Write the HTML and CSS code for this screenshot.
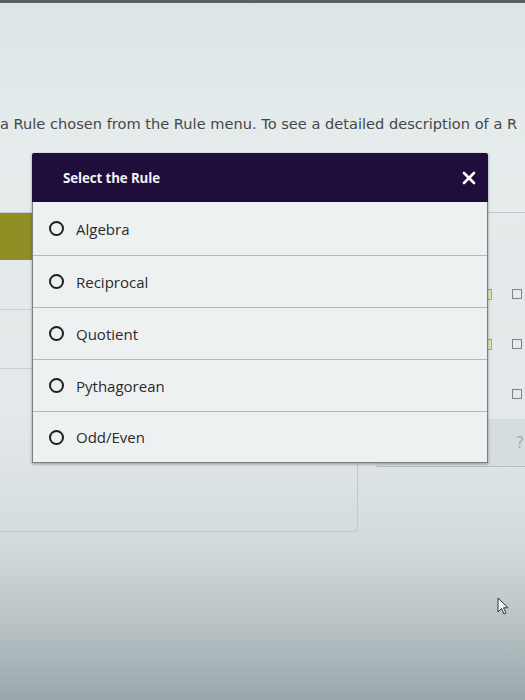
FILE: index.html
```html
<!DOCTYPE html>
<html>
<head>
<meta charset="utf-8">
<link rel="stylesheet" href="styles.css">
</head>
<body>
<div class="screen">
  <div class="topbar"></div>
  <p class="intro">a Rule chosen from the Rule menu. To see a detailed description of a R</p>
  <div class="stage">
    <div class="left">
      <div class="band"><div class="olive"></div></div>
      <div class="lrow"></div>
      <div class="lrow tall"></div>
      <div class="panel"></div>
    </div>
    <div class="right">
      <div class="mark-row"><span class="tick"></span><span class="box"></span></div>
      <div class="mark-row"><span class="tick"></span><span class="box"></span></div>
      <div class="mark-row"><span class="box"></span></div>
      <div class="rpanel"><span class="q">?</span></div>
    </div>
  </div>

  <div class="modal">
    <div class="modal-head">
      <span class="modal-title">Select the Rule</span>
      <svg class="close" width="14" height="14" viewBox="0 0 14 14"><path d="M2 2 L12 12 M12 2 L2 12" stroke="#fff" stroke-width="2.6" stroke-linecap="round"/></svg>
    </div>
    <ul class="options">
      <li class="opt first"><span class="radio"></span>Algebra</li>
      <li class="opt"><span class="radio"></span>Reciprocal</li>
      <li class="opt"><span class="radio"></span>Quotient</li>
      <li class="opt"><span class="radio"></span>Pythagorean</li>
      <li class="opt last"><span class="radio"></span>Odd/Even</li>
    </ul>
  </div>

  <svg class="cursor" width="14" height="20" viewBox="0 0 14 20"><path d="M1 1 L1 15 L4.5 11.5 L7 17 L9 16 L6.5 10.8 L11 10.8 Z" fill="#f2f4f4" stroke="#333" stroke-width="1"/></svg>
</div>
</body>
</html>
```
FILE: styles.css
```css
html, body { margin: 0; padding: 0; }
.screen {
  width: 525px;
  height: 700px;
  position: relative;
  overflow: hidden;
  background: linear-gradient(180deg, #dce5e7 0px, #e6ecec 150px, #e3e9ea 420px, #d4dbdd 540px, #bac4c7 620px, #9ba7ab 700px);
}
.topbar { height: 3px; background: #5e6060; }
.intro {
  margin: 111px 0 0 0;
  line-height: 20px;
  font-family: "DejaVu Sans", sans-serif;
  font-size: 14.6px;
  color: #454747;
  white-space: nowrap;
}
.stage { display: flex; margin-top: 78px; }
.left { width: 358px; }
.band { height: 47px; border-top: 1px solid #c4cacb; display: flex; }
.olive { width: 33px; background: #928e26; }
.lrow { height: 49px; border-bottom: 1px solid #c9cfd0; }
.lrow.tall { height: 58px; }
.panel {
  height: 162px;
  border-right: 1px solid #c3cacb;
  border-bottom: 1px solid #c3cacb;
  border-bottom-right-radius: 4px;
}
.right { flex: 1; padding-top: 56px; border-top: 1px solid #c4cacb; }
.mark-row { height: 50px; display: flex; align-items: center; }
.tick {
  width: 4px; height: 9px;
  margin-left: 128px;
  border: 1.5px solid #b5ae3a;
  background: #e6e6b0;
}
.box {
  width: 8px; height: 8px;
  margin-left: auto; margin-right: 3px;
  border: 1.5px solid #7d8384;
}
.rpanel {
  height: 47px;
  margin-left: 17px;
  background: #d6dddf;
  border-bottom: 1px solid #b8bfc0;
  border-bottom-left-radius: 3px;
  position: relative;
}
.q {
  position: absolute; right: 1px; top: 15px;
  font-family: "DejaVu Sans", sans-serif; font-size: 15px; color: #a2aaac;
}

.modal {
  position: absolute;
  left: 32px; top: 153px;
  width: 456px;
  box-shadow: 0 1px 3px rgba(0,0,0,0.35);
  font-family: "Open Sans", sans-serif;
}
.modal-head {
  height: 49px;
  background: #1f0e3b;
  display: flex;
  align-items: center;
  justify-content: space-between;
  padding: 0 12px 0 31px;
  border-radius: 2px 2px 0 0;
}
.modal-title { color: #f4f1f6; font-weight: 700; font-size: 13.3px; letter-spacing: -0.1px; }
.close { margin-top: 1px; }
.options {
  list-style: none; margin: 0; padding: 0;
  background: #eef1f1;
  border: 1px solid #7b7f80;
  border-top: none;
}
.opt {
  height: 51px;
  display: flex; align-items: center;
  padding-left: 16px;
  font-size: 15px;
  color: #2a2b2c;
  border-bottom: 1px solid #b4b9ba;
}
.opt.first { height: 53px; }
.opt.last { border-bottom: none; height: 50px; }
.radio {
  width: 11px; height: 11px;
  border: 2.5px solid #1e1f20;
  border-radius: 50%;
  margin-right: 12px;
}
.cursor { position: absolute; left: 497px; top: 597px; }
```
